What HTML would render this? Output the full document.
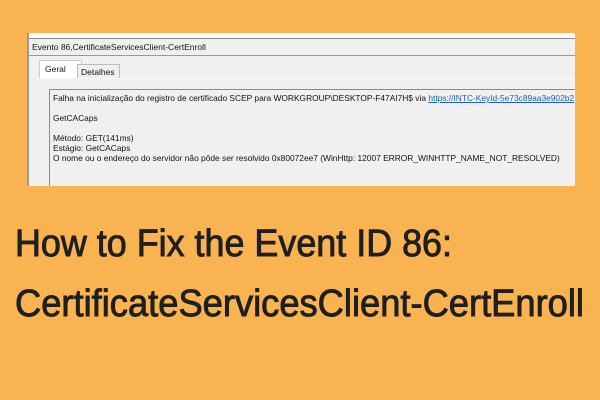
<!DOCTYPE html>
<html><head><meta charset="utf-8"><style>
body{margin:0;width:600px;height:400px;background:#f9b451;position:relative;overflow:hidden;font-family:"Liberation Sans",sans-serif}
.win{position:absolute;left:27px;top:33px;width:546px;height:153px;background:#f0f0f0;overflow:hidden;border-left:2px solid #9a9a9a}
.top{position:absolute;left:0;top:0;width:100%;height:5px;background:#fff;border-bottom:1px solid #888}
.tt{position:absolute;left:0;top:6px;width:100%;height:16px;background:#f0f0f0;border-bottom:1px solid #999;font-size:8.5px;line-height:16px;padding-left:3px;color:#111}
.tab{position:absolute;font-size:8.5px;color:#111;line-height:14px}
.box{position:absolute;left:20px;top:56px;width:540px;height:110px;border:1px solid #8a8a8a;border-right:none;background:#f0f0f0;font-size:8.4px;color:#111;line-height:10px;padding:3px 0 0 3px;white-space:nowrap}
a{color:#1a5fc0;text-decoration:underline}
</style></head><body>
<div class="win">
<div class="top"></div>
<div class="tt">Evento 86,CertificateServicesClient-CertEnroll</div>
<div class="tab" style="left:10px;top:27px;width:36px;height:18px;background:#fff;border:1px solid #ccc;border-bottom:none;padding-left:5px;line-height:17px">Geral</div>
<div class="tab" style="left:48px;top:31px;width:38px;height:14px;background:#f0f0f0;border:1px solid #bbb;border-bottom:none;padding-left:3px">Detalhes</div>
<div style="position:absolute;left:8px;top:45px;width:540px;height:1px;background:#fafafa"></div>
<div class="box">Falha na inicialização do registro de certificado SCEP para WORKGROUP\DESKTOP-F47AI7H$ via <a>https://INTC-KeyId-5e73c89aa3e902b2</a><br><br>GetCACaps<br><br>Método: GET(141ms)<br>Estágio: GetCACaps<br>O nome ou o endereço do servidor não pôde ser resolvido 0x80072ee7 (WinHttp: 12007 ERROR_WINHTTP_NAME_NOT_RESOLVED)</div>
</div>
<svg width="600" height="400" style="position:absolute;left:0;top:0">
<g fill="#1f1f1f" stroke="#1f1f1f" stroke-width="0.9">
<text x="15" y="256" font-family="Liberation Sans" font-size="38" textLength="437" lengthAdjust="spacingAndGlyphs">How to Fix the Event ID 86:</text>
<text x="15" y="316" font-family="Liberation Sans" font-size="38" textLength="569" lengthAdjust="spacingAndGlyphs">CertificateServicesClient-CertEnroll</text>
</g>
</svg>
</body></html>
